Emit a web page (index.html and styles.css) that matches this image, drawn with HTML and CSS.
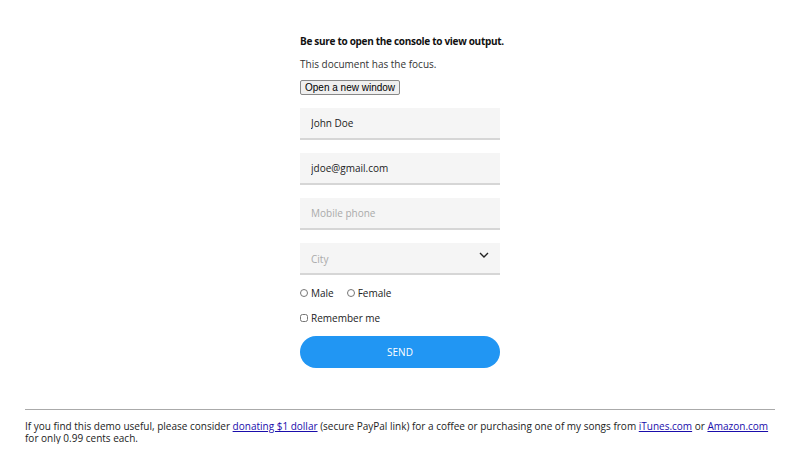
FILE: index.html
```html
<!DOCTYPE html>
<html lang="en">
<head>
    <meta charset="UTF-8">
    <title>Form demo</title>
    <link rel="stylesheet" href="styles.css">
</head>
<body>

<div class="wrap">
    <p class="note"><b>Be sure to open the console to view output.</b></p>
    <p class="note small">This document has the focus.</p>
    <button class="open-btn">Open a new window</button>

    <!-- Form -->
    <form class="form">
        <div class="field">
            <input type="text" value="John Doe">
        </div>
        <div class="field">
            <input type="email" value="jdoe@gmail.com">
        </div>
        <div class="field">
            <input type="tel" placeholder="Mobile phone">
        </div>
        <div class="field select">
            <select>
                <option>City</option>
            </select>
            <svg class="chev" width="10" height="6" viewBox="0 0 10 6"><path d="M1 1l4 4 4-4" fill="none" stroke="#222" stroke-width="1.4"/></svg>
        </div>
        <div class="choice">
            <label><input type="radio" name="sex"> Male</label>
            <label><input type="radio" name="sex"> Female</label>
        </div>
        <div class="choice">
            <label><input type="checkbox"> Remember me</label>
        </div>
        <button type="button" class="send">SEND</button>
    </form>
</div>

<div class="footer">
    <hr>
    <p>If you find this demo useful, please consider <a href="#">donating $1 dollar</a> (secure PayPal link) for a coffee or purchasing one of my songs from <a href="#">iTunes.com</a> or <a href="#">Amazon.com</a> for only 0.99 cents each.</p>
</div>

</body>
</html>
```
FILE: styles.css
```css
body {
    margin: 0;
    font-family: "Open Sans", sans-serif;
    font-size: 10px;
    color: #222;
}

.wrap {
    width: 200px;
    margin: 0 auto;
    padding-top: 34px;
}

.note {
    margin: 0 0 8px;
    line-height: 15px;
    white-space: nowrap;
    color: #111;
}

.note b {
    letter-spacing: -0.3px;
}

.note.small {
    color: #333;
}

.open-btn {
    font-family: "Liberation Sans", Arial, sans-serif;
    font-size: 10px;
    height: 15px;
    padding: 0 4px;
    margin: 0;
    border: 1px solid #888;
    border-radius: 2px;
    background: #efefef;
    color: #000;
}

.form {
    display: flex;
    flex-direction: column;
    gap: 13px;
    margin-top: 13px;
}

.field {
    position: relative;
}

.field input,
.field select {
    display: block;
    width: 100%;
    box-sizing: border-box;
    height: 32px;
    padding: 0 11px;
    border: none;
    border-bottom: 2px solid #d6d6d6;
    background: #f5f5f5;
    font-family: "Open Sans", sans-serif;
    font-size: 10px;
    color: #222;
    outline: none;
    appearance: none;
}

.field input::placeholder {
    color: #aaa;
}

.field select {
    color: #aaa;
    padding-top: 2px;
}

.chev {
    position: absolute;
    right: 11px;
    top: 9px;
}

.choice {
    display: flex;
    gap: 13px;
    margin-top: -2px;
}

.choice + .choice {
    margin-top: -2px;
}

.choice label {
    display: flex;
    align-items: center;
}

.choice input {
    margin: 0 3px 0 0;
    width: 8px;
    height: 8px;
}

.send {
    height: 32px;
    border: none;
    border-radius: 16px;
    background: #2196f3;
    color: #fff;
    font-family: "Open Sans", sans-serif;
    font-size: 10px;
    margin-top: -2px;
}

.footer {
    margin: 41px 25px 0;
}

.footer hr {
    border: none;
    border-top: 1px solid #aaa;
    margin: 0;
}

.footer p {
    margin: 10px 0 0;
    line-height: 12px;
}

.footer a {
    color: #1a0dab;
}
```
